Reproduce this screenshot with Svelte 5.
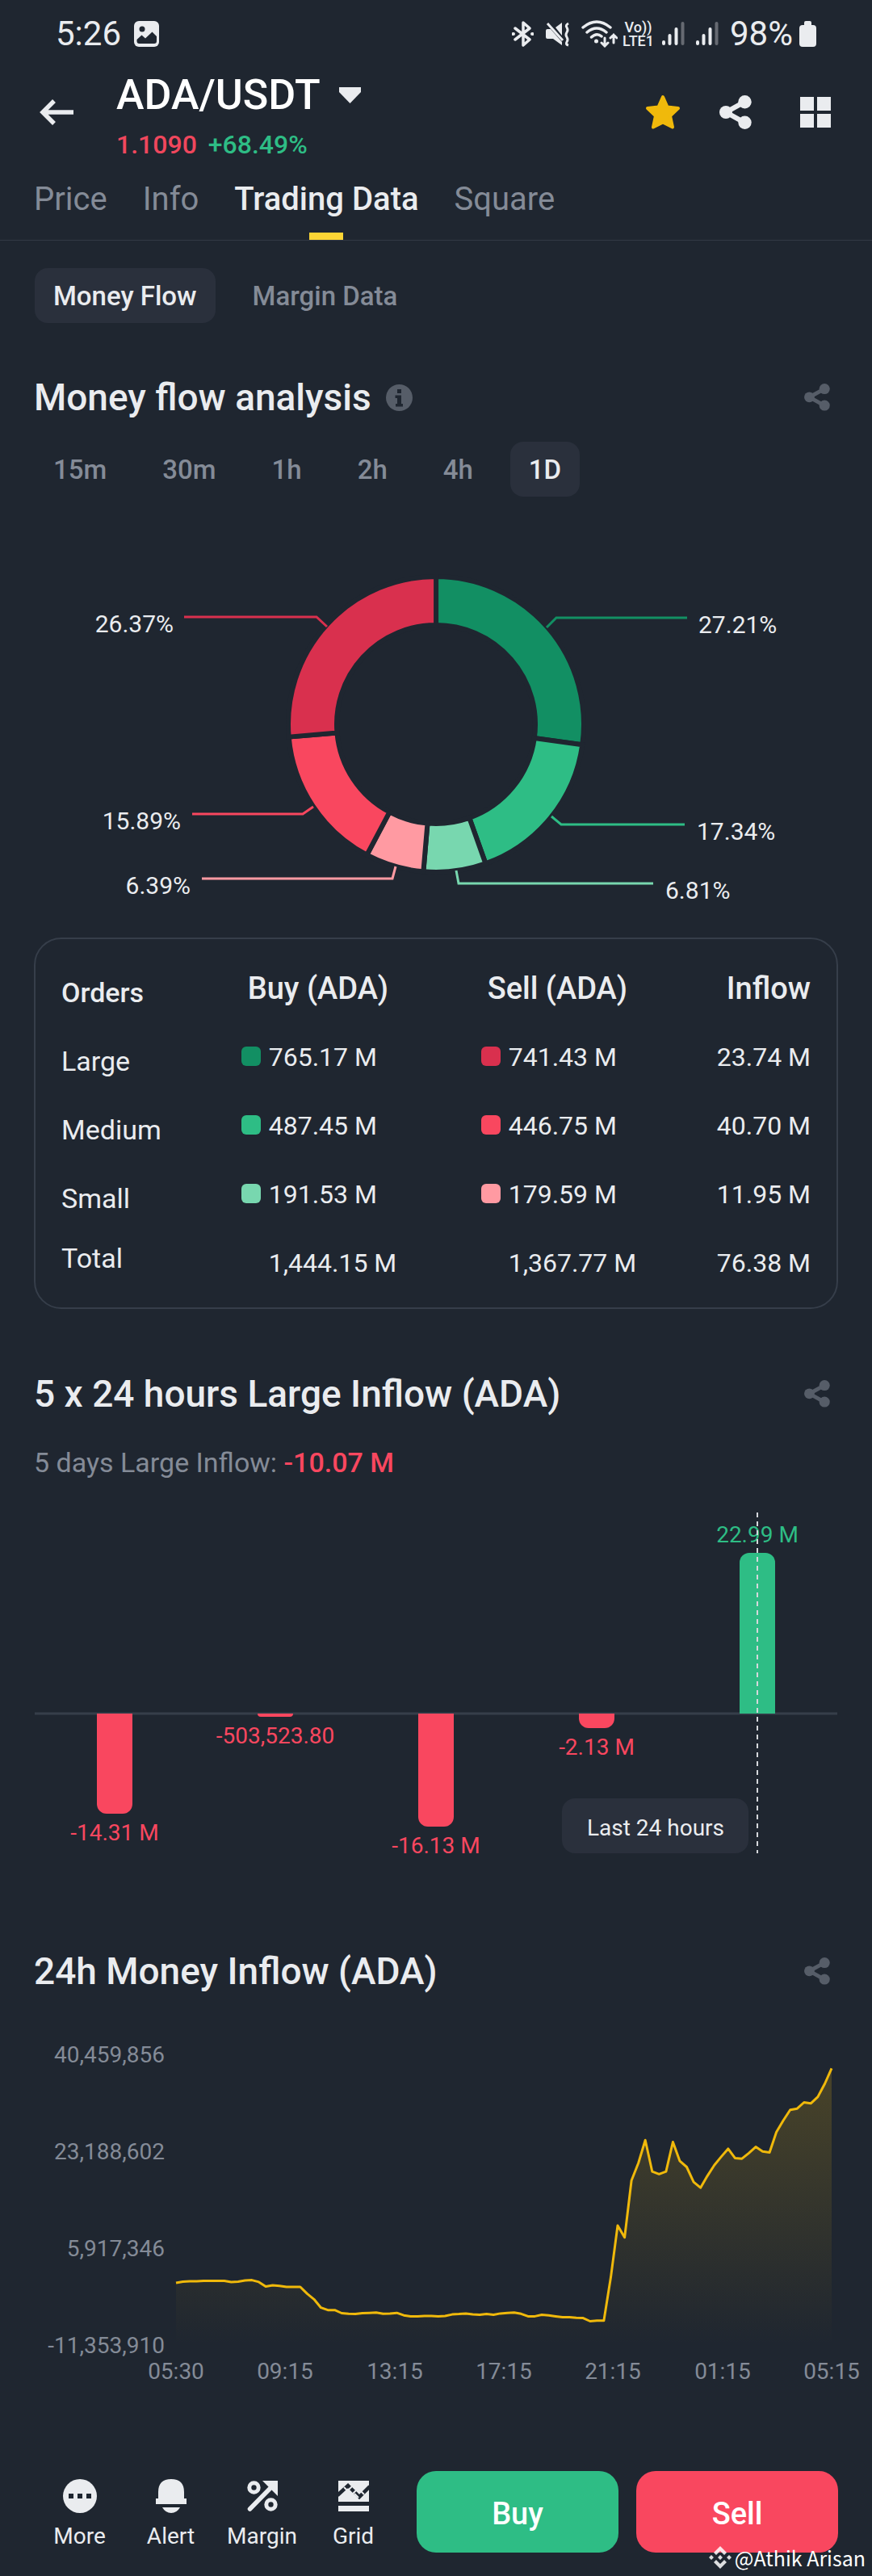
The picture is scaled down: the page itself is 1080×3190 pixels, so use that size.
<script>
  const tabs = ["Price", "Info", "Trading Data", "Square"];
  const ranges = ["15m", "30m", "1h", "2h", "4h", "1D"];

  let tab = $state("Trading Data");
  let view = $state("Money Flow");
  let range = $state("1D");

  // donut slices, clockwise from the top
  // line = leader points, x/y = label position
  const slices = [
    { pct: 27.21, color: "#128f63", line: "677,162 689,150 851,150", x: 865, y: 169 },
    { pct: 17.34, color: "#2ebd85", line: "683,396 695,406 848,406", x: 863, y: 425 },
    { pct: 6.81, color: "#78d7af", line: "565,463 568,479 809,479", x: 824, y: 498 },
    { pct: 6.39, color: "#ff9aa2", line: "490,458 486,473 250,473", x: 236, y: 492 },
    { pct: 15.89, color: "#f9475f", line: "388,384 375,393 238,393", x: 224, y: 412 },
    { pct: 26.37, color: "#d9304e", line: "405,161 392,149 228,149", x: 215, y: 168 },
  ];

  const cx = 540;
  const cy = 282;
  const R = 183;
  const r = 123;

  function point(radius, turn) {
    const a = turn * Math.PI * 2;
    return `${(cx + radius * Math.sin(a)).toFixed(2)} ${(cy - radius * Math.cos(a)).toFixed(2)}`;
  }

  let sum = 0;
  const arcs = slices.map((s) => {
    const from = sum / 100;
    sum += s.pct;
    const to = sum / 100;
    return {
      ...s,
      d: `M${point(R, from)} A${R} ${R} 0 0 1 ${point(R, to)} L${point(r, to)} A${r} ${r} 0 0 0 ${point(r, from)} Z`,
    };
  });

  const orders = [
    { name: "Large", buy: "765.17 M", sell: "741.43 M", inflow: "23.74 M", size: "large" },
    { name: "Medium", buy: "487.45 M", sell: "446.75 M", inflow: "40.70 M", size: "medium" },
    { name: "Small", buy: "191.53 M", sell: "179.59 M", inflow: "11.95 M", size: "small" },
  ];

  // daily large inflow, in millions
  const zero = 291;
  const days = [
    { value: -14.31, label: "-14.31 M" },
    { value: -0.5, label: "-503,523.80" },
    { value: -16.13, label: "-16.13 M" },
    { value: -2.13, label: "-2.13 M" },
    { value: 22.99, label: "22.99 M" },
  ].map((d, i) => {
    const x = 120 + i * 199;
    const h = Math.round(Math.abs(d.value) * 8.65);
    const c = Math.min(12, h);
    const s = d.value > 0 ? -1 : 1;
    const sweep = s > 0 ? 0 : 1;
    return {
      ...d,
      x: x + 22,
      y: s > 0 ? zero + h + 33 : zero - h - 13,
      path: `M${x} ${zero} v${s * (h - c)} a${c} ${c} 0 0 ${sweep} ${c} ${s * c} h${44 - 2 * c} a${c} ${c} 0 0 ${sweep} ${c} ${-s * c} V${zero} z`,
    };
  });

  // money inflow every 15 minutes, in millions
  const inflow = [
    -0.27, -0.05, 0, 0, 0.11, 0.11, 0.11, 0.11, -0.11, -0.05, 0.17, 0.22,
    -0.11, -0.93, -0.71, -0.82, -0.99, -0.99, -0.99, -2.2, -3.19, -4.68, -5.12, -5.12,
    -5.67, -5.78, -5.83, -5.67, -5.62, -5.56, -5.78, -5.73, -5.62, -6.06, -6.22, -6.22,
    -6.17, -6.17, -6.22, -6.17, -5.89, -5.83, -5.73, -5.89, -5.95, -5.83, -5.95, -5.73,
    -5.62, -5.56, -5.78, -6.22, -6.22, -5.95, -6.06, -6.22, -6.39, -6.39, -6.5, -6.55,
    -7.11, -7, -7, 0.72, 9.97, 7.82, 17.96, 21.1, 25.18, 19.56, 19.12, 19.56,
    24.84, 21.43, 20.38, 17.69, 16.69, 18.79, 20.71, 22.2, 23.63, 21.98, 21.87, 22.86,
    23.96, 23.14, 22.97, 26.61, 28.7, 30.57, 30.79, 31.9, 31.73, 32.89, 35.2, 37.95,
  ];
  const yLabels = ["40,459,856", "23,188,602", "5,917,346", "-11,353,910"];
  const xLabels = ["05:30", "09:15", "13:15", "17:15", "21:15", "01:15", "05:15"];

  const line = inflow
    .map((v, i) => {
      const x = 218 + (i * 812) / (inflow.length - 1);
      const y = 77 + ((40.46 - v) / 51.81) * 360;
      return `${x.toFixed(1)},${y.toFixed(1)}`;
    })
    .join(" ");
</script>

{#snippet share()}
  <svg viewBox="0 0 40 42" fill="currentColor" aria-hidden="true">
    <path d="M31.5 8 L8 21 L31.5 34" fill="none" stroke="currentColor" stroke-width="6" />
    <circle cx="8" cy="21" r="8" />
    <circle cx="31.5" cy="8.2" r="8.2" />
    <circle cx="31.5" cy="33.8" r="8.2" />
  </svg>
{/snippet}

{#snippet signal()}
  <svg width="28" height="30" viewBox="0 0 28 30" fill="none" stroke="currentColor" stroke-width="4" stroke-linecap="round">
    <path d="M2 25v2M9.500 17v10M17.500 9v18" />
    <path d="M25.500 2v25" opacity=".35" />
  </svg>
{/snippet}

<div class="page">
  <div class="status">
    <span class="time">5:26</span>
    <svg class="photo" width="31" height="32" viewBox="0 0 31 32">
      <rect width="31" height="32" rx="6" fill="currentColor" />
      <circle cx="10" cy="10" r="3.500" fill="#1f2630" />
      <path d="M3.500 23 L9.500 17.500 L14 21.500 L22.500 13.500 L28 19 V25 Q28 28 25 28 H6.500 Q3.500 28 3.500 25Z" fill="#1f2630" />
    </svg>

    <div class="right">
      <svg width="27" height="32" viewBox="0 0 27 32" fill="none" stroke="currentColor" stroke-width="3.500" stroke-linecap="round" stroke-linejoin="round">
        <path d="M4 9 L22 23 L14 30 V2 L22 9 L4 23" />
        <path d="M1.500 16h.5M25 16h.5" stroke-width="4" />
      </svg>
      <svg width="31" height="32" viewBox="0 0 31 32">
        <path d="M1 12 q0-2 2-2 h4 L21 26 V30 L10 22 H3 q-2 0-2-2z M13 8 L21 2 V18z" fill="currentColor" />
        <path d="M3 3 L22 24 M29 3 q-4 2-2 5 t0 6 t0 6 t0 6 t2 4" fill="none" stroke="currentColor" stroke-width="3" />
      </svg>
      <svg width="45" height="34" viewBox="0 0 45 34" fill="none" stroke="currentColor" stroke-width="3.500" stroke-linecap="round">
        <path d="M2 9 Q19-5 36 9 M7 15 Q19 5 31 15 M12.500 21 Q19 15 25 20" />
        <circle cx="18.500" cy="26" r="2.500" fill="currentColor" stroke="none" />
        <path d="M29 22v10M25 28l4 4 4-4M40 28V18M36 22l4-4 4 4" stroke-width="3" />
      </svg>
      <span class="volte"><b>Vo))</b><b>LTE1</b></span>
      {@render signal()}
      {@render signal()}
      <span class="time battery">98%</span>
      <svg width="21" height="32" viewBox="0 0 21 32" fill="currentColor">
        <path d="M6 5 V2 q0-2 2-2 h5 q2 0 2 2 V5 h2 q4 0 4 4 V28 q0 4-4 4 H4 q-4 0-4-4 V9 q0-4 4-4z" />
      </svg>
    </div>
  </div>

  <header class="header">
    <button class="icon" aria-label="Back">
      <svg width="42" height="32" viewBox="0 0 42 32" fill="none" stroke="currentColor" stroke-width="5.500">
        <path d="M42 16 H4 M18 2 L4 16 L18 30" />
      </svg>
    </button>
    <div class="pair">
      <button class="symbol">
        ADA/USDT
        <svg width="27" height="20" viewBox="0 0 27 20"><path d="M0 0H27V6L13.500 20L0 6z" fill="#eaecef" /></svg>
      </button>
      <div class="price">
        <span class="down">1.1090</span>
        <span class="up">+68.49%</span>
      </div>
    </div>
    <button class="icon star" aria-label="Favourite">
      <svg width="44" height="44" viewBox="0 0 44 44">
        <path d="M22 3 L27.500 15.500 L41 17 L31 26.500 L34 40.500 L22 34.500 L10 40.500 L13 26.500 L3 17 L16.500 15.500z" fill="#f0b90b" stroke="#f0b90b" stroke-width="4" stroke-linejoin="round" />
      </svg>
    </button>
    <button class="icon share-big" aria-label="Share">{@render share()}</button>
    <button class="icon" aria-label="Apps">
      <svg width="38" height="38" viewBox="0 0 38 38" fill="currentColor">
        <path d="M0 0h17v17H0zM21 0h17v17H21zM0 21h17v17H0zM21 21h17v17H21z" />
      </svg>
    </button>
  </header>

  <nav class="tabs">
    {#each tabs as name}
      <button class:active={tab === name} onclick={() => (tab = name)}>{name}</button>
    {/each}
  </nav>

  <main>
    <div class="pills views">
      {#each ["Money Flow", "Margin Data"] as name}
        <button class:active={view === name} onclick={() => (view = name)}>{name}</button>
      {/each}
    </div>

    <section>
      <div class="heading">
        <h2>Money flow analysis</h2>
        <svg class="info" width="33" height="33" viewBox="0 0 33 33">
          <circle cx="16.500" cy="16.500" r="16.500" fill="#565d68" />
          <path d="M14 6h5v5h-5zM11.500 13.500H19V24h2v3.500h-9V24h2v-7h-2.500z" fill="#1f2630" />
        </svg>
        <button class="icon share" aria-label="Share">{@render share()}</button>
      </div>
      <div class="pills ranges">
        {#each ranges as name}
          <button class:active={range === name} onclick={() => (range = name)}>{name}</button>
        {/each}
      </div>

      <svg class="chart" viewBox="0 0 1080 546">
        {#each arcs as a}
          <path d={a.d} fill={a.color} stroke="#1f2630" stroke-width="6" />
          <polyline points={a.line} fill="none" stroke={a.color} stroke-width="3" />
          <text x={a.x} y={a.y} text-anchor={a.x > cx ? "start" : "end"} class="percent">{a.pct}%</text>
        {/each}
      </svg>

      <div class="card">
        <table>
          <thead>
            <tr>
              <th class="name">Orders</th>
              <th class="big">Buy (ADA)</th>
              <th class="big">Sell (ADA)</th>
              <th class="big inflow">Inflow</th>
            </tr>
          </thead>
          <tbody>
            {#each orders as o}
              <tr>
                <td class="name">{o.name}</td>
                <td><i class="swatch buy-{o.size}"></i>{o.buy}</td>
                <td><i class="swatch sell-{o.size}"></i>{o.sell}</td>
                <td class="inflow">{o.inflow}</td>
              </tr>
            {/each}
            <tr>
              <td class="total">Total</td>
              <td><i class="swatch"></i>1,444.15 M</td>
              <td><i class="swatch"></i>1,367.77 M</td>
              <td class="inflow">76.38 M</td>
            </tr>
          </tbody>
        </table>
      </div>
    </section>

    <section>
      <div class="heading">
        <h2>5 x 24 hours Large Inflow (ADA)</h2>
        <button class="icon share" aria-label="Share">{@render share()}</button>
      </div>
      <p class="summary">5 days Large Inflow: <b>-10.07 M</b></p>

      <svg class="chart" viewBox="0 0 1080 505">
        <path d="M43 {zero}H1037" stroke="#363e4a" stroke-width="3" />
        {#each days as d}
          <path d={d.path} fill={d.value > 0 ? "#2ebd85" : "#f9475f"} />
          <text x={d.x} y={d.y} text-anchor="middle" class={d.value > 0 ? "gain" : "loss"}>{d.label}</text>
        {/each}
        <path d="M938 42V464" stroke="#d5d8dc" stroke-width="2" stroke-dasharray="6 5" />
        <rect x="696" y="396" width="231" height="68" rx="16" fill="#2a303c" />
        <text x="812" y="442" text-anchor="middle" class="tip">Last 24 hours</text>
      </svg>
    </section>

    <section>
      <div class="heading">
        <h2>24h Money Inflow (ADA)</h2>
        <button class="icon share" aria-label="Share">{@render share()}</button>
      </div>

      <svg class="chart" viewBox="0 0 1080 500">
        <defs>
          <linearGradient id="fade" x1="0" y1="95" x2="0" y2="437" gradientUnits="userSpaceOnUse">
            <stop offset="0" stop-color="#f0b90b" stop-opacity=".2" />
            <stop offset="1" stop-color="#f0b90b" stop-opacity="0" />
          </linearGradient>
        </defs>
        <polygon points="218,437 {line} 1030,437" fill="url(#fade)" />
        <polyline points={line} fill="none" stroke="#f0b90b" stroke-width="3" stroke-linejoin="round" />
        {#each yLabels as label, i}
          <text x="204" y={87 + i * 120} text-anchor="end" class="axis">{label}</text>
        {/each}
        {#each xLabels as label, i}
          <text x={218 + Math.round((i * 812) / 6)} y="479" text-anchor="middle" class="axis">{label}</text>
        {/each}
      </svg>
    </section>
  </main>

  <footer class="footer">
    <nav class="actions">
      <button>
        <svg width="42" height="42" viewBox="0 0 42 42">
          <circle cx="21" cy="21" r="21" fill="currentColor" />
          <path d="M7 18h6v6H7zM18 18h6v6h-6zM29 18h6v6h-6z" fill="#1f2630" />
        </svg>
        More
      </button>
      <button>
        <svg width="42" height="42" viewBox="0 0 42 42" fill="currentColor">
          <path d="M5 16 Q5 0 21 0 T37 16 V24 H40 V31 H2 V24 H5z" />
          <path d="M10 35H32Q28 42 21 42T10 35z" />
        </svg>
        Alert
      </button>
      <button>
        <svg width="42" height="42" viewBox="0 0 42 42" fill="none" stroke="currentColor">
          <circle cx="10.500" cy="10.500" r="5.700" stroke-width="5" />
          <circle cx="31.500" cy="31.500" r="5.700" stroke-width="5" />
          <path d="M5.500 37 L32 10" stroke-width="5.500" stroke-linecap="round" />
          <path d="M21 2H40V21z" fill="currentColor" stroke="none" />
        </svg>
        Margin
      </button>
      <button>
        <svg width="42" height="42" viewBox="0 0 42 42">
          <path d="M2 2H40V28H2zM2 33H40V40H2z" fill="currentColor" />
          <path d="M1 20 L14 8 L28 22 L41 9" fill="none" stroke="#1f2630" stroke-width="4.500" />
          <path d="M9 10l4 4M19 9l-4 4M24 14l-5 5M22 18l5 5M34 19l-4-4" stroke="currentColor" stroke-width="2" />
        </svg>
        Grid
      </button>
    </nav>
    <button class="trade buy">Buy</button>
    <button class="trade sell">Sell</button>
  </footer>

  <div class="author">
    <svg width="28" height="28" viewBox="0 0 28 28" fill="currentColor">
      <path d="M14 0L22 8L19 11L14 6L9 11L6 8zM14 28L22 20L19 17L14 22L9 17L6 20zM14 11L17 14L14 17L11 14zM3 11L6 14L3 17L0 14zM25 11L28 14L25 17L22 14z" />
    </svg>
    @Athik Arisan
  </div>
</div>

<style>
  :global(body) {
    margin: 0;
    background: #1f2630;
  }

  .page {
    position: relative;
    color: #eaecef;
    background: #1f2630;
    font-family: Roboto, "Liberation Sans", sans-serif;
    font-size: 32px;
    line-height: 40px;
  }

  svg {
    display: block;
    flex: none;
  }

  button {
    padding: 0;
    border: 0;
    color: inherit;
    background: none;
    font: inherit;
    cursor: pointer;
  }

  .status {
    display: flex;
    align-items: center;
    padding: 18px 69px 12px;
    line-height: 48px;
  }
  .time {
    font-size: 42px;
  }
  .photo {
    margin-left: 16px;
  }
  .right {
    display: flex;
    align-items: center;
    gap: 14px;
    margin-left: auto;
  }
  .volte {
    display: grid;
    justify-items: center;
    margin: 0 -4px 0 -8px;
    font-size: 18px;
    line-height: 17px;
  }
  .volte b {
    font-weight: 500;
  }
  .battery {
    margin-right: -6px;
  }

  .header {
    display: flex;
    align-items: center;
    padding: 0 51px 0 49px;
  }
  .pair {
    display: grid;
    gap: 11px;
    margin-right: auto;
    padding: 10px 0 0 53px;
  }
  .symbol {
    display: flex;
    align-items: center;
    gap: 23px;
    color: #fff;
    font-size: 52px;
    font-weight: 500;
    line-height: 60px;
  }
  .price {
    display: flex;
    gap: 14px;
    font-weight: 500;
  }
  .up {
    color: #2ebd85;
  }
  .down {
    color: #f0475d;
  }
  .star {
    margin-right: 48px;
  }
  .share-big {
    margin-right: 60px;
  }
  .share-big svg {
    width: 40px;
  }

  .tabs {
    display: flex;
    gap: 44px;
    padding: 24px 42px 0;
    border-bottom: 1px solid #323944;
    color: #848b97;
    font-size: 40px;
    line-height: 48px;
  }
  .tabs button {
    position: relative;
    padding-bottom: 26px;
  }
  .tabs .active {
    color: #eaecef;
    font-weight: 500;
  }
  .tabs .active::after {
    content: "";
    position: absolute;
    bottom: 0;
    left: 50%;
    width: 42px;
    height: 9px;
    margin-left: -21px;
    background: #fcd535;
  }

  .pills {
    display: flex;
    gap: 23px;
    padding: 0 43px;
    color: #848b97;
    font-size: 33px;
    font-weight: 500;
  }
  .pills button {
    padding: 15px 23px 13px;
    border-radius: 16px;
  }
  .pills .active {
    color: #eaecef;
    background: #2a303c;
  }
  .views {
    margin: 34px 0 66px;
  }
  .ranges {
    margin-top: 29px;
  }

  section + section {
    margin-top: 79px;
  }
  .heading {
    display: flex;
    align-items: center;
    padding: 0 52px 0 42px;
  }
  h2 {
    margin: 0;
    font-size: 46px;
    font-weight: 500;
    line-height: 52px;
  }
  .info {
    margin-left: 18px;
  }
  .share {
    margin-left: auto;
    color: #565d68;
  }
  .share svg {
    width: 32px;
  }

  .chart {
    width: 100%;
    overflow: visible;
    font-size: 28px;
  }
  .percent {
    fill: #eaecef;
    font-size: 30px;
  }
  .gain {
    fill: #2ebd85;
  }
  .loss {
    fill: #f9475f;
  }
  .tip {
    fill: #eaecef;
  }
  .axis {
    fill: #848b97;
  }

  .card {
    margin: 0 42px;
    padding: 18px 32px 13px;
    border: 2px solid #363e4a;
    border-radius: 34px;
  }
  table {
    width: 100%;
    table-layout: fixed;
    border-collapse: collapse;
  }
  th,
  td {
    height: 85px;
    padding: 0;
    text-align: left;
    white-space: nowrap;
  }
  th {
    width: 32%;
    font-size: 38px;
    font-weight: 500;
  }
  th.name {
    width: 24%;
  }
  th.inflow {
    width: 14%;
  }
  th:nth-child(3) {
    width: 30%;
  }
  .big {
    padding-left: 8px;
    box-sizing: border-box;
  }
  .name,
  .total {
    box-sizing: border-box;
    font-size: 34px;
  }
  .name {
    padding-top: 10px;
  }
  .total {
    padding-bottom: 12px;
  }
  .inflow {
    padding-left: 0;
    text-align: right;
  }
  .swatch {
    display: inline-block;
    width: 24px;
    height: 24px;
    margin-right: 10px;
    border-radius: 6px;
  }
  .buy-large {
    background: #128f63;
  }
  .buy-medium {
    background: #2ebd85;
  }
  .buy-small {
    background: #78d7af;
  }
  .sell-large {
    background: #d9304e;
  }
  .sell-medium {
    background: #f9475f;
  }
  .sell-small {
    background: #ff9aa2;
  }

  .summary {
    margin: 39px 42px 0;
    color: #848b97;
    font-size: 34px;
  }
  .summary b {
    color: #f9475f;
    font-weight: 500;
  }

  .footer {
    display: grid;
    grid-template-columns: 452px 1fr 1fr;
    gap: 22px;
    margin-top: 93px;
    padding: 0 42px 29px;
  }
  .actions {
    display: grid;
    grid-template-columns: repeat(4, 1fr);
    align-items: start;
    padding-top: 10px;
  }
  .actions button {
    display: grid;
    justify-items: center;
    gap: 12px;
    font-size: 28px;
    line-height: 34px;
  }
  .trade {
    height: 101px;
    padding-top: 4px;
    border-radius: 24px;
    color: #fff;
    font-size: 38px;
    font-weight: 500;
  }
  .buy {
    background: #2ebd85;
  }
  .sell {
    background: #f9475f;
  }

  /* sits over the Sell button's corner */
  .author {
    position: absolute;
    right: 8px;
    bottom: 6px;
    display: flex;
    align-items: center;
    gap: 4px;
    color: #fff;
    font-family: "Noto Sans CJK SC", sans-serif;
    font-size: 25px;
    line-height: 34px;
  }
  .author svg {
    opacity: 0.85;
  }
</style>
